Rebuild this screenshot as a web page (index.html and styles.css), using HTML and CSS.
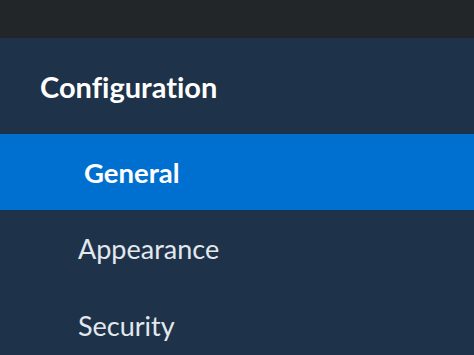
FILE: index.html
```html
<!DOCTYPE html>
<html>
<head>
<meta charset="utf-8">
<link rel="stylesheet" href="styles.css">
</head>
<body>
<div class="topbar"></div>
<nav class="sidebar">
  <div class="section-title">Configuration</div>
  <div class="item active">General</div>
  <div class="item">Appearance</div>
  <div class="item">Security</div>
</nav>
</body>
</html>
```

FILE: styles.css
```css
html, body {
  margin: 0;
  padding: 0;
  height: 100%;
  overflow: hidden;
}
body {
  background: #1e3249;
  font-family: Lato, "Liberation Sans", sans-serif;
  color: #e8edf2;
  font-variant-ligatures: no-common-ligatures;
}
.topbar {
  height: 38px;
  background: #232628;
}
.sidebar {
  display: flex;
  flex-direction: column;
}
.section-title {
  height: 96px;
  display: flex;
  align-items: center;
  padding-left: 40px;
  font-weight: 700;
  font-size: 29px;
  color: #ffffff;
}
.item {
  height: 77px;
  display: flex;
  align-items: center;
  padding-left: 78px;
  font-size: 27px;
  color: #e2e8ee;
}
.item.active {
  height: 76px;
  background: #0070d0;
  padding-left: 84px;
  font-weight: 700;
  font-size: 27.5px;
  color: #ffffff;
}
```
